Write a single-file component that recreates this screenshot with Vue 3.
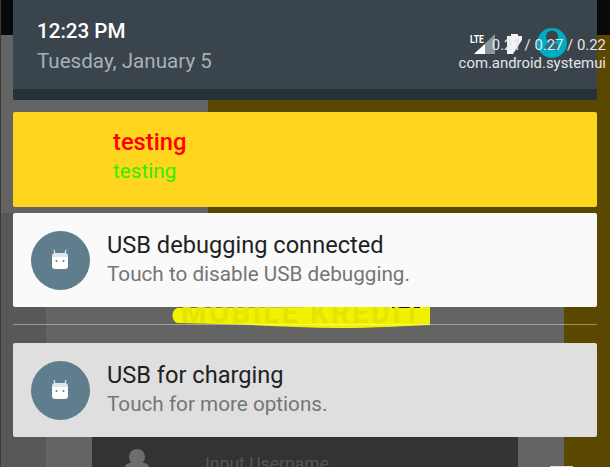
<template>
  <div class="screen">
    <!-- dimmed app behind the shade -->
    <div class="backdrop">
      <div class="bg-top"></div>
      <div class="bg-brown"></div>
      <div class="bg-brown-right"></div>
      <div class="bg-dialog"></div>
      <div class="bg-form"></div>
      <div class="bg-marker">
        <svg class="marker-stroke" viewBox="0 0 264 24" width="264" height="24">
          <path d="M10 3 263 1v19c-30 1-55 3-90 3-40 0-80-3-120-4-15 0-30-1-43-1a8.500 8.500 0 0 1 0-15z" fill="#f2f200" />
          <path d="M225 0h28v3h-28z" fill="#1c1c00" />
        </svg>
        <span class="marker-text">MOBILE KREDIT</span>
      </div>
      <svg class="bg-user" viewBox="0 0 26 18" width="26" height="18">
        <circle cx="13" cy="8" r="8" fill="#6d6d6d" />
        <path d="M1 18c0-3 5-5 12-5s12 2 12 5z" fill="#6d6d6d" />
      </svg>
      <div class="bg-input">Input Username</div>
      <div class="bg-corner"></div>
    </div>

    <div class="shade">
      <header class="header">
        <div class="header-main">
          <div class="time">12:23 PM</div>
          <div class="date">Tuesday, January 5</div>
        </div>
        <div class="header-strip"></div>
      </header>

      <section class="card card-yellow">
        <div class="test-title">testing</div>
        <div class="test-text">testing</div>
      </section>

      <section v-for="item in notifications" :key="item.title" class="card card-notice" :class="item.tone">
        <div class="avatar">
          <svg viewBox="0 0 20 22" width="20" height="22">
            <path d="M5 5 4 1M15 5l1-4" stroke="#dfe5e8" stroke-width="1.2" fill="none" />
            <path d="M2 7a3 3 0 0 1 3-3h10a3 3 0 0 1 3 3v1H2z" fill="#dfe5e8" />
            <path d="M2 8h16v9a3 3 0 0 1-3 3H5a3 3 0 0 1-3-3z" fill="#fff" />
            <circle cx="6.500" cy="12" r="1" fill="#5f7d8d" />
            <circle cx="13.500" cy="12" r="1" fill="#5f7d8d" />
          </svg>
        </div>
        <div class="notice-body">
          <div class="notice-title">{{ item.title }}</div>
          <div class="notice-text">{{ item.text }}</div>
        </div>
        <div v-if="item.divider" class="divider"></div>
      </section>
    </div>

    <!-- status icons and the cpu overlay -->
    <div class="status">
      <span class="lte">LTE</span>
      <svg class="signal" viewBox="0 0 21 20" width="21" height="20">
        <path d="M21 0v20H0z" fill="#8f969b" />
        <path d="M11 10v10H0z" fill="#fff" />
      </svg>
      <svg class="battery" viewBox="0 0 15 20" width="15" height="20">
        <path d="M4 0h7v2h4v18H0V2h4z" fill="#f4f4f4" />
        <path d="M15 6 6 20h9z" fill="#3a444c" />
      </svg>
      <svg class="account" viewBox="0 0 30 30" width="30" height="30">
        <circle cx="15" cy="15" r="15" fill="#00acc1" />
        <circle cx="15" cy="8.500" r="6" fill="#37424a" />
        <path d="M7 21c1-4 4-7 8-7s7 3 8 7H7z" fill="#2f6d7c" />
      </svg>
    </div>
    <div class="overlay">
      <div>0.21 / 0.27 / 0.22</div>
      <div>com.android.systemui</div>
    </div>
  </div>
</template>

<script setup>
  const notifications = [
    {
      title: 'USB debugging connected',
      text: 'Touch to disable USB debugging.',
      tone: 'light',
      divider: true,
    },
    {
      title: 'USB for charging',
      text: 'Touch for more options.',
      tone: 'grey',
      divider: false,
    },
  ];
</script>

<style>
  html,
  body {
    margin: 0;
    background: #666;
  }
</style>

<style scoped>
  .screen {
    position: relative;
    width: 610px;
    height: 467px;
    overflow: hidden;
    background: #646464;
    font-family: Roboto, 'Liberation Sans', sans-serif;
  }

  .backdrop {
    position: absolute;
    inset: 0;
    border-left: 1px solid #3a3a3a;
    box-sizing: border-box;
  }

  .bg-top {
    position: absolute;
    left: 0;
    right: -1px;
    top: 0;
    height: 35px;
    background: #0a0a0a;
  }

  .bg-brown {
    position: absolute;
    left: 207px;
    right: 0;
    top: 35px;
    height: 178px;
    background: #5a4800;
  }

  .bg-brown-right {
    position: absolute;
    left: 563px;
    right: 0;
    top: 35px;
    bottom: 0;
    background: #5a4800;
  }

  .bg-dialog {
    position: absolute;
    left: 0;
    width: 45px;
    top: 213px;
    bottom: 0;
    background: #585858;
  }

  .bg-form {
    position: absolute;
    left: 91px;
    width: 426px;
    top: 437px;
    bottom: 0;
    background: #333;
  }

  .bg-marker {
    position: absolute;
    left: 166px;
    top: 305px;
    width: 264px;
    height: 24px;
  }

  .marker-stroke {
    position: absolute;
    left: 0;
    top: 0;
  }

  .marker-text {
    position: absolute;
    left: 14px;
    top: -7px;
    font-size: 29px;
    font-weight: 700;
    line-height: 30px;
    letter-spacing: 2.500px;
    color: #e4e400;
    white-space: nowrap;
  }

  .bg-user {
    position: absolute;
    left: 123px;
    top: 449px;
  }

  .bg-input {
    position: absolute;
    left: 204px;
    top: 453px;
    font-size: 17.600px;
    line-height: 22px;
    color: #555;
    white-space: nowrap;
  }

  .bg-corner {
    position: absolute;
    left: 549px;
    top: 466px;
    width: 23px;
    height: 1px;
    background: #ddd;
  }

  .shade {
    position: relative;
    display: flex;
    flex-direction: column;
    margin: 0 13px;
  }

  .header {
    height: 100px;
    display: flex;
    flex-direction: column;
    border-radius: 0 0 2px 2px;
    overflow: hidden;
    background: #3a444c;
  }

  .header-main {
    flex: 1;
    padding: 19px 24px 0;
  }

  .time {
    font-size: 20.600px;
    font-weight: 500;
    line-height: 24px;
    color: #fff;
  }

  .date {
    margin-top: 6px;
    font-size: 20.600px;
    line-height: 24px;
    color: #a9b0b5;
  }

  .header-strip {
    height: 11px;
    background: #263238;
  }

  .card {
    position: relative;
    box-sizing: border-box;
    border-radius: 2px;
  }

  .card-yellow {
    height: 95px;
    margin-top: 12px;
    padding: 15px 0 0 100px;
    background: #ffd61f;
  }

  .test-title {
    font-size: 23.700px;
    font-weight: 500;
    line-height: 30px;
    color: #ff0000;
  }

  .test-text {
    font-size: 20.700px;
    line-height: 28px;
    color: #33ee00;
  }

  .card-notice {
    height: 94px;
    margin-top: 6px;
    display: flex;
    align-items: center;
    padding-left: 17.500px;
  }

  .card-notice.light {
    background: #fafafa;
  }

  .card-notice.grey {
    margin-top: 36px;
    background: #dfdfdf;
  }

  .avatar {
    flex-shrink: 0;
    width: 59px;
    height: 59px;
    display: flex;
    align-items: center;
    justify-content: center;
    border-radius: 50%;
    background: #5f7d8d;
  }

  .notice-body {
    margin-left: 17.500px;
    margin-top: -3px;
  }

  .notice-title {
    font-size: 23.600px;
    line-height: 28px;
    color: #212121;
  }

  .notice-text {
    margin-top: 2px;
    font-size: 20.700px;
    line-height: 26px;
    color: #757575;
  }

  .divider {
    position: absolute;
    left: 0;
    right: 0;
    top: 111px;
    height: 1px;
    background: rgba(255, 255, 255, 0.4);
  }

  .status {
    position: absolute;
    inset: 0;
    pointer-events: none;
  }

  .lte {
    position: absolute;
    left: 470px;
    top: 32px;
    font-size: 11.500px;
    font-weight: 700;
    line-height: 14px;
    color: #fff;
    transform: scaleX(0.75);
    transform-origin: left;
  }

  .signal {
    position: absolute;
    left: 474px;
    top: 34px;
  }

  .battery {
    position: absolute;
    left: 507px;
    top: 34px;
  }

  .account {
    position: absolute;
    left: 537px;
    top: 28px;
  }

  .overlay {
    position: absolute;
    right: 4px;
    top: 36px;
    font-size: 14.900px;
    line-height: 18px;
    text-align: right;
    color: #e6e6e6;
    white-space: nowrap;
  }
</style>
